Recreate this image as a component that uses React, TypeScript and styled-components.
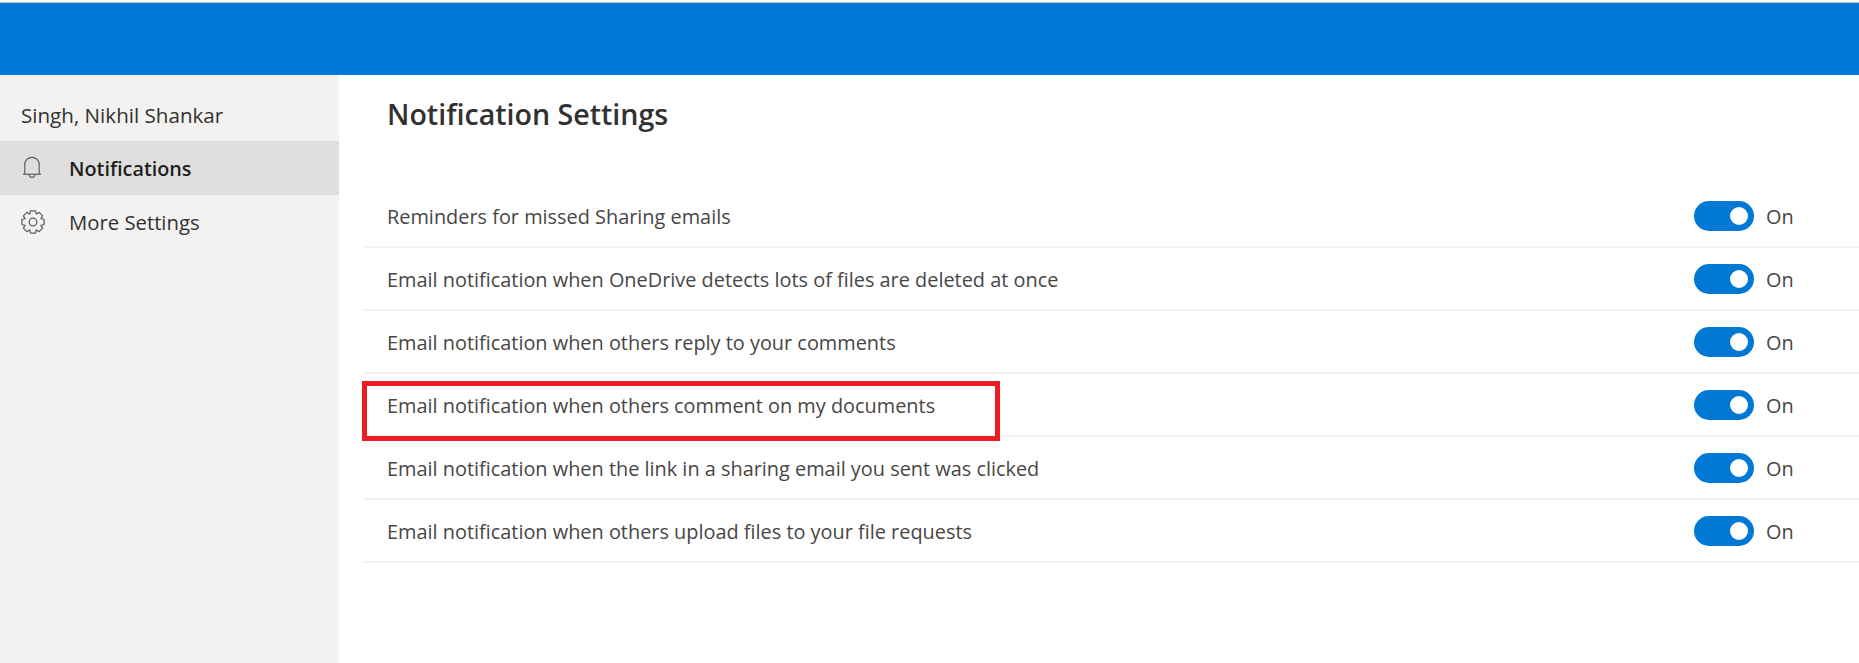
import styled, { createGlobalStyle } from "styled-components";

const GlobalStyle = createGlobalStyle`
  html, body {
    margin: 0;
    padding: 0;
    background: #fff;
  }
  body {
    font-family: "Open Sans", "Noto Sans", sans-serif;
  }
`;

const Page = styled.div`
  height: 663px;
  display: flex;
  flex-direction: column;
  overflow: hidden;
  padding-top: 2px;
  box-sizing: border-box;
`;

const TopBar = styled.div`
  height: 73px;
  flex: none;
  box-sizing: border-box;
  border-top: 1px solid #c8c8c8;
  background: #0078d7;
`;

const Body = styled.div`
  flex: 1;
  display: flex;
`;

const Sidebar = styled.nav`
  width: 339px;
  flex: none;
  background: #f3f2f1;
  padding-top: 24px;
`;

const UserName = styled.div`
  height: 42px;
  line-height: 32px;
  padding-left: 21px;
  font-size: 20.6px;
  font-weight: 500;
  color: #323130;
`;

const NavItem = styled.div<{ $active?: boolean }>`
  height: 54px;
  display: flex;
  align-items: center;
  background: ${(p) => (p.$active ? "#e1dfdd" : "transparent")};
  color: ${(p) => (p.$active ? "#201f1e" : "#323130")};
  font-size: ${(p) => (p.$active ? "19.8px" : "20.3px")};
  font-weight: ${(p) => (p.$active ? 600 : 400)};
`;

const NavIcon = styled.span`
  width: 69px;
  padding-left: 21px;
  box-sizing: border-box;
  display: flex;
  align-items: center;
  color: #605e5c;
`;

const Main = styled.main`
  flex: 1;
  padding-left: 24px;
`;

const Title = styled.h1`
  margin: 0;
  height: 110px;
  padding: 20px 0 0 24px;
  box-sizing: border-box;
  font-size: 28.6px;
  line-height: 38px;
  font-weight: 600;
  color: #323130;
`;

const List = styled.div`
  display: flex;
  flex-direction: column;
`;

const Row = styled.div`
  position: relative;
  height: 63px;
  box-sizing: border-box;
  border-bottom: 2px solid #f3f2f1;
  display: flex;
  align-items: center;
  padding-left: 24px;
  font-size: 19.9px;
  color: #484644;
`;

const Label = styled.span`
  flex: 1;
  padding-top: 2px;
`;

const Toggle = styled.span`
  width: 60px;
  height: 30px;
  margin-top: 1px;
  border-radius: 15px;
  background: #0078d4;
  display: flex;
  align-items: center;
  justify-content: flex-end;
  padding-right: 6px;
  box-sizing: border-box;
`;

const Knob = styled.span`
  width: 18px;
  height: 18px;
  border-radius: 50%;
  background: #fff;
`;

const State = styled.span`
  width: 105px;
  padding: 2px 0 0 12px;
  box-sizing: border-box;
  color: #484644;
`;

const Highlight = styled.div`
  position: absolute;
  left: -1px;
  top: 7px;
  width: 638px;
  height: 60px;
  border: 5px solid #ed1c24;
  box-sizing: border-box;
  pointer-events: none;
`;

const BellIcon = () => (
  <svg width="22" height="24" viewBox="0 0 22 24" fill="none" stroke="currentColor" strokeWidth="1.2">
    <path d="M3.8 18V8.5a7.2 7.2 0 0 1 14.4 0V18" />
    <path d="M2 18.2h18" />
    <path d="M8.2 18.5a2.8 2.8 0 0 0 5.6 0" />
  </svg>
);

// 8 tooth outline, easier to compute than to write by hand
const gearPath = () => {
  const points: string[] = [];
  for (let i = 0; i < 8; i++) {
    const a = (i * Math.PI) / 4 - Math.PI / 2;
    [
      [-0.39, 8.6],
      [-0.22, 11.4],
      [0.22, 11.4],
      [0.39, 8.6],
    ].forEach(([da, r]) => {
      points.push(`${(12 + r * Math.cos(a + da)).toFixed(2)} ${(12 + r * Math.sin(a + da)).toFixed(2)}`);
    });
  }
  return `M${points.join("L")}Z`;
};

const GearIcon = () => (
  <svg width="24" height="24" viewBox="0 0 24 24" fill="none" stroke="currentColor" strokeWidth="1.25" strokeLinejoin="round">
    <path d={gearPath()} />
    <circle cx="12" cy="12" r="3.8" />
  </svg>
);

const settings = [
  { label: "Reminders for missed Sharing emails" },
  { label: "Email notification when OneDrive detects lots of files are deleted at once" },
  { label: "Email notification when others reply to your comments" },
  { label: "Email notification when others comment on my documents", highlighted: true },
  { label: "Email notification when the link in a sharing email you sent was clicked" },
  { label: "Email notification when others upload files to your file requests" },
];

export default function App() {
  return (
    <Page>
      <GlobalStyle />
      <TopBar />
      <Body>
        <Sidebar>
          <UserName>Singh, Nikhil Shankar</UserName>
          <NavItem $active>
            <NavIcon>
              <BellIcon />
            </NavIcon>
            Notifications
          </NavItem>
          <NavItem>
            <NavIcon>
              <GearIcon />
            </NavIcon>
            More Settings
          </NavItem>
        </Sidebar>
        <Main>
          <Title>Notification Settings</Title>
          <List>
            {settings.map((s) => (
              <Row key={s.label}>
                <Label>{s.label}</Label>
                <Toggle>
                  <Knob />
                </Toggle>
                <State>On</State>
                {s.highlighted && <Highlight />}
              </Row>
            ))}
          </List>
        </Main>
      </Body>
    </Page>
  );
}
